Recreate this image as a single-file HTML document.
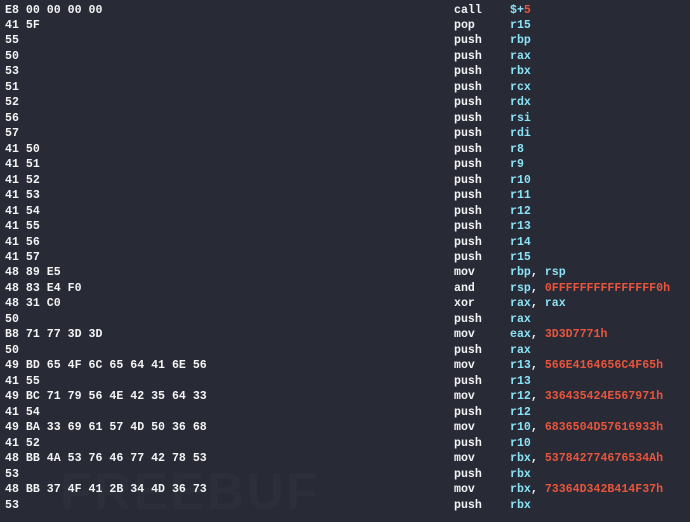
<!DOCTYPE html>
<html><head><meta charset="utf-8"><style>
html,body{margin:0;padding:0;background:#282a36;width:690px;height:513px;overflow:hidden}
body{font-family:"Liberation Mono",monospace;font-size:11.6px;font-weight:bold;color:#f4f4f4}
.r{position:absolute;left:0;height:15px;white-space:pre}
.h{position:absolute;left:5px}
.i{position:absolute;left:454px}
.o{position:absolute;left:510px;color:#8be3f6}
.n{color:#e8553c}
.c{color:#f4f4f4}
.w{position:absolute;left:60px;top:462px;font-family:"Liberation Sans",sans-serif;font-size:52px;font-weight:bold;color:#2c2e3a;letter-spacing:2px}
</style></head><body>
<div class="w">FREEBUF</div>
<div id="c"></div>
<script>
var L=[["E8 00 00 00 00","call",'$+<span class="n">5</span>'],["41 5F","pop","r15"],["55","push","rbp"],["50","push","rax"],["53","push","rbx"],["51","push","rcx"],["52","push","rdx"],["56","push","rsi"],["57","push","rdi"],["41 50","push","r8"],["41 51","push","r9"],["41 52","push","r10"],["41 53","push","r11"],["41 54","push","r12"],["41 55","push","r13"],["41 56","push","r14"],["41 57","push","r15"],["48 89 E5","mov",'rbp<span class="c">,</span> rsp'],["48 83 E4 F0","and",'rsp<span class="c">,</span> <span class="n">0FFFFFFFFFFFFFFF0h</span>'],["48 31 C0","xor",'rax<span class="c">,</span> rax'],["50","push","rax"],["B8 71 77 3D 3D","mov",'eax<span class="c">,</span> <span class="n">3D3D7771h</span>'],["50","push","rax"],["49 BD 65 4F 6C 65 64 41 6E 56","mov",'r13<span class="c">,</span> <span class="n">566E4164656C4F65h</span>'],["41 55","push","r13"],["49 BC 71 79 56 4E 42 35 64 33","mov",'r12<span class="c">,</span> <span class="n">336435424E567971h</span>'],["41 54","push","r12"],["49 BA 33 69 61 57 4D 50 36 68","mov",'r10<span class="c">,</span> <span class="n">6836504D57616933h</span>'],["41 52","push","r10"],["48 BB 4A 53 76 46 77 42 78 53","mov",'rbx<span class="c">,</span> <span class="n">537842774676534Ah</span>'],["53","push","rbx"],["48 BB 37 4F 41 2B 34 4D 36 73","mov",'rbx<span class="c">,</span> <span class="n">73364D342B414F37h</span>'],["53","push","rbx"]];
var h="";for(var k=0;k<L.length;k++){var t=3.5+k*15.47;h+='<div class="r" style="top:'+t.toFixed(2)+'px"><span class="h">'+L[k][0]+'</span><span class="i">'+L[k][1]+'</span><span class="o">'+L[k][2]+'</span></div>';}
document.getElementById("c").innerHTML=h;
</script>
</body></html>
